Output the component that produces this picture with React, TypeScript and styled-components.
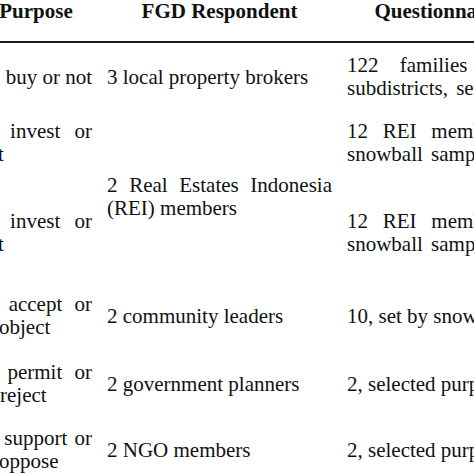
import React from 'react';
import styled, { createGlobalStyle } from 'styled-components';

const GlobalStyle = createGlobalStyle`
  html, body {
    margin: 0;
    padding: 0;
    background: #fff;
    overflow: hidden;
  }
  body {
    font-family: "Liberation Serif", "Times New Roman", serif;
    color: #111;
  }
`;

type Row = {
  lead: string;
  leadSpread?: number;
  tail?: string;
  tailIndent?: number;
  fgd?: string;
  fgdSpan?: number;
  quest: { text: string; spread?: number }[];
  top: number;
  bottom: number;
};

const rows: Row[] = [
  {
    lead: 'buy or not',
    fgd: '3 local property brokers',
    quest: [
      { text: '122 families from', spread: 16 },
      { text: 'subdistricts, selected randomly', spread: 3 },
    ],
    top: 11,
    bottom: 10,
  },
  {
    lead: 'invest or',
    leadSpread: 9,
    tail: 'not',
    tailIndent: 1,
    fgd: '2 Real Estates Indonesia (REI) members',
    fgdSpan: 2,
    quest: [
      { text: '12 REI members, selected by', spread: 9.5 },
      { text: 'snowball sampling technique', spread: 3 },
    ],
    top: 10,
    bottom: 22,
  },
  {
    lead: 'invest or',
    leadSpread: 9,
    tail: 'not',
    tailIndent: 1,
    quest: [
      { text: '12 REI members, selected by', spread: 9.5 },
      { text: 'snowball sampling technique', spread: 3 },
    ],
    top: 22,
    bottom: 18,
  },
  {
    lead: 'accept or',
    leadSpread: 7,
    tail: 'object',
    tailIndent: 23,
    fgd: '2 community leaders',
    quest: [{ text: '10, set by snowball sampling' }],
    top: 19,
    bottom: 11,
  },
  {
    lead: 'permit or',
    leadSpread: 7,
    tail: 'reject',
    tailIndent: 24,
    fgd: '2 government planners',
    quest: [{ text: '2, selected purposively' }],
    top: 11,
    bottom: 10,
  },
  {
    lead: 'support or',
    leadSpread: 2,
    tail: 'oppose',
    tailIndent: 23,
    fgd: '2 NGO members',
    quest: [{ text: '2, selected purposively' }],
    top: 10,
    bottom: 10,
  },
];

export default function App() {
  return (
    <Frame>
      <GlobalStyle />
      <Table>
        <colgroup>
          <col style={{ width: 131 }} />
          <col style={{ width: 240 }} />
          <col style={{ width: 308 }} />
        </colgroup>
        <thead>
          <tr>
            <HeadCell $nudge={4}>Purpose</HeadCell>
            <HeadCell>FGD Respondent</HeadCell>
            <HeadCell>Questionnaire Respondent</HeadCell>
          </tr>
        </thead>
        <tbody>
          {rows.map((r, i) => (
            <BodyRow key={i} $top={r.top} $bottom={r.bottom}>
              <Cell>
                <Lead $spread={r.leadSpread ?? 0}>{r.lead}</Lead>
                {r.tail && <Tail $indent={r.tailIndent ?? 0}>{r.tail}</Tail>}
              </Cell>
              {r.fgd &&
                (r.fgdSpan ? (
                  <SpanCell rowSpan={r.fgdSpan}>{r.fgd}</SpanCell>
                ) : (
                  <FgdCell>{r.fgd}</FgdCell>
                ))}
              <Cell>
                {r.quest.map((q, j) => (
                  <QuestLine key={j} $spread={q.spread ?? 0}>
                    {q.text}
                  </QuestLine>
                ))}
              </Cell>
            </BodyRow>
          ))}
        </tbody>
      </Table>
    </Frame>
  );
}

const Frame = styled.div`
  width: 474px;
  height: 474px;
  overflow: hidden;
  background: #fff;
`;

const Table = styled.table`
  border-collapse: collapse;
  table-layout: fixed;
  width: 679px;
  margin: 0 0 0 -32px;
  font-size: 21px;
  line-height: 23px;
`;

const HeadCell = styled.th<{ $nudge?: number }>`
  font-weight: bold;
  text-align: center;
  padding: 0 7px 18px ${({ $nudge = 0 }) => 8 + $nudge}px;
  border-bottom: 2px solid #1c1c1c;
  white-space: nowrap;
`;

const BodyRow = styled.tr<{ $top: number; $bottom: number }>`
  --pt: ${({ $top }) => $top}px;
  --pb: ${({ $bottom }) => $bottom}px;
`;

const Cell = styled.td`
  vertical-align: middle;
  padding: var(--pt) 7px var(--pb) 8px;
`;

const FgdCell = styled(Cell)`
  text-align: justify;
`;

const SpanCell = styled(FgdCell)`
  padding-top: calc(var(--pt) + 22px);
`;

const Lead = styled.div<{ $spread: number }>`
  text-align: right;
  white-space: nowrap;
  word-spacing: ${({ $spread }) => $spread}px;
`;

const Tail = styled.div<{ $indent: number }>`
  text-align: left;
  white-space: nowrap;
  padding-left: ${({ $indent }) => $indent}px;
`;

const QuestLine = styled.div<{ $spread: number }>`
  white-space: nowrap;
  word-spacing: ${({ $spread }) => $spread}px;
`;
